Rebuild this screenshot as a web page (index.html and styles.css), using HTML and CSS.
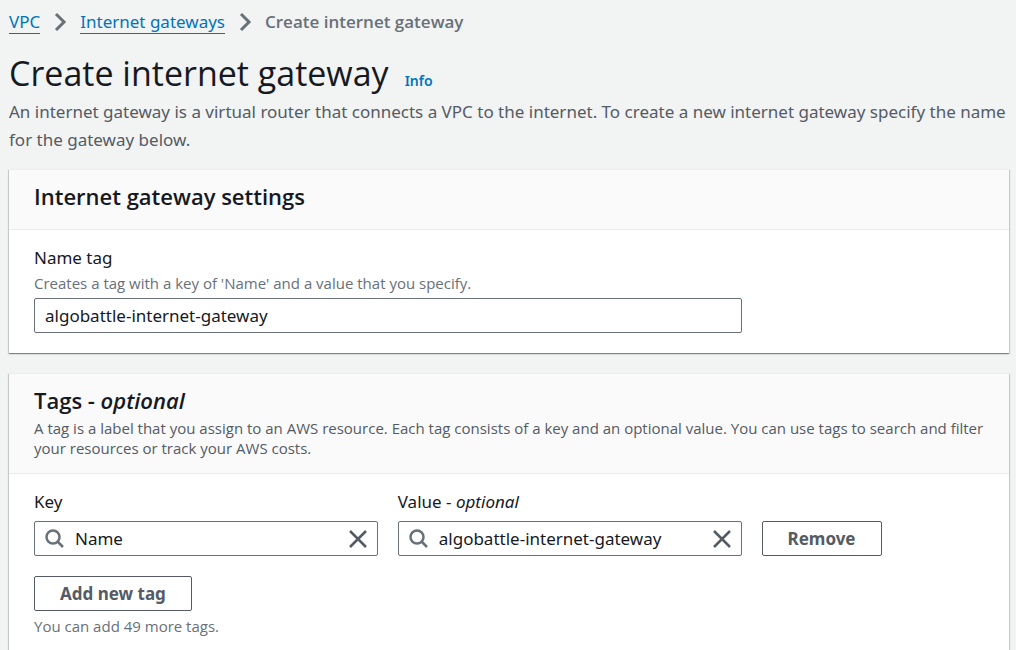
FILE: index.html
```html
<!DOCTYPE html>
<html lang="en">
<head>
  <meta charset="UTF-8" />
  <meta name="viewport" content="width=device-width, initial-scale=1.0" />
  <title>Create internet gateway | VPC</title>
  <link rel="stylesheet" href="styles.css">
</head>
<body>

  <nav class="breadcrumbs" aria-label="Breadcrumbs">
    <a href="#vpc">VPC</a>
    <svg class="chevron" viewBox="0 0 12 20" aria-hidden="true"><path d="M2 2l8 8-8 8" /></svg>
    <a href="#igws">Internet gateways</a>
    <svg class="chevron" viewBox="0 0 12 20" aria-hidden="true"><path d="M2 2l8 8-8 8" /></svg>
    <span class="current">Create internet gateway</span>
  </nav>

  <main>
    <header class="page-header">
      <div class="title-row">
        <h1>Create internet gateway</h1>
        <a class="info" href="#info">Info</a>
      </div>
      <p>An internet gateway is a virtual router that connects a VPC to the internet. To create a new internet gateway specify the name for the gateway below.</p>
    </header>

    <form>
      <section class="card">
        <div class="card-header">
          <h2>Internet gateway settings</h2>
        </div>
        <div class="card-body form-grid">
          <div class="field field-wide">
            <label for="name-tag">Name tag</label>
            <p class="hint" id="name-hint">Creates a tag with a key of 'Name' and a value that you specify.</p>
            <input class="text-input" type="text" id="name-tag" aria-describedby="name-hint" value="algobattle-internet-gateway">
          </div>
        </div>
      </section>

      <section class="card">
        <div class="card-header">
          <h2>Tags - <em>optional</em></h2>
          <p>A tag is a label that you assign to an AWS resource. Each tag consists of a key and an optional value. You can use tags to search and filter your resources or track your AWS costs.</p>
        </div>
        <div class="card-body">
          <div class="form-grid">
            <div class="field tag-field">
              <label for="tag-key">Key</label>
              <div class="search-box">
                <svg class="icon-search" viewBox="0 0 20 20" aria-hidden="true"><circle cx="8" cy="8" r="6.5" /><path d="M12.5 12.5l5.5 5.5" /></svg>
                <input type="text" id="tag-key" value="Name">
                <button class="clear-btn" type="button" aria-label="Clear key">
                  <svg viewBox="0 0 20 20" aria-hidden="true"><path d="M2 2l16 16M18 2L2 18" /></svg>
                </button>
              </div>
            </div>
            <div class="field tag-field">
              <label for="tag-value">Value - <em>optional</em></label>
              <div class="search-box">
                <svg class="icon-search" viewBox="0 0 20 20" aria-hidden="true"><circle cx="8" cy="8" r="6.5" /><path d="M12.5 12.5l5.5 5.5" /></svg>
                <input type="text" id="tag-value" value="algobattle-internet-gateway">
                <button class="clear-btn" type="button" aria-label="Clear value">
                  <svg viewBox="0 0 20 20" aria-hidden="true"><path d="M2 2l16 16M18 2L2 18" /></svg>
                </button>
              </div>
            </div>
            <button class="btn remove-btn" type="button">Remove</button>
          </div>
          <button class="btn add-btn" type="button">Add new tag</button>
          <p class="hint">You can add 49 more tags.</p>
        </div>
      </section>
    </form>
  </main>

</body>
</html>
```

FILE: styles.css
```css
* {
  box-sizing: border-box;
}

body {
  margin: 0;
  padding: 8px 7px 0 9px;
  font-family: 'Noto Sans', 'Open Sans', sans-serif;
  font-size: 17px;
  line-height: 28px;
  background-color: #f2f3f3;
  color: #16191f;
}

h1, h2, p {
  margin: 0;
}

a {
  color: #0073bb;
  text-decoration: none;
}

.breadcrumbs {
  display: flex;
  align-items: center;
  gap: 13px;
}

.breadcrumbs a {
  line-height: 22px;
  border-bottom: 1px solid #0073bb;
}

.chevron {
  width: 14px;
  height: 20px;
  fill: none;
  stroke: #687078;
  stroke-width: 3;
}

.current {
  font-family: 'Open Sans', sans-serif;
  color: #687078;
  font-weight: 600;
}

.page-header {
  padding: 15px 0;
  color: #545b64;
}

.title-row {
  display: flex;
  align-items: baseline;
  gap: 16px;
  margin-bottom: 2px;
}

h1 {
  font-family: 'Open Sans', sans-serif;
  font-size: 34px;
  line-height: 45px;
  font-weight: 400;
  color: #16191f;
}

.info {
  font-size: 14px;
  font-weight: 600;
}

.card {
  margin-bottom: 20px;
  background-color: white;
  border-top: 1px solid #eaeded;
  box-shadow: 0 1px 1px 0 rgba(0,28,36,0.3), 1px 1px 1px 0 rgba(0,28,36,0.15), -1px 1px 1px 0 rgba(0,28,36,0.15);
}

.card:last-child {
  margin-bottom: 0;
}

.card-header {
  min-height: 60px;
  padding: 12px 25px 15px;
  background-color: #fafafa;
  border-bottom: 1px solid #eaeded;
}

h2 {
  font-family: 'Open Sans', sans-serif;
  font-size: 22px;
  line-height: 28px;
  font-weight: 600;
}

.card-header p {
  margin-top: 4px;
  font-family: 'Open Sans', sans-serif;
  font-size: 15px;
  line-height: 20px;
  color: #545b64;
}

.card-body {
  padding: 14px 25px 20px;
}

.form-grid {
  display: grid;
  grid-template-columns: repeat(8, minmax(0, 1fr));
  column-gap: 20px;
  align-items: end;
}

.field {
  display: flex;
  flex-direction: column;
}

.field-wide {
  grid-column: span 6;
}

.tag-field {
  grid-column: span 3;
  gap: 5px;
}

.hint {
  font-family: 'Open Sans', sans-serif;
  font-size: 15px;
  line-height: 22px;
  color: #687078;
}

input {
  min-width: 0;
  font: inherit;
  color: inherit;
}

.text-input,
.search-box {
  height: 35px;
  padding: 0 9px 0 10px;
  background-color: white;
  border: 1px solid #687078;
  border-radius: 2px;
}

.field .hint {
  margin-bottom: 4px;
}

.search-box {
  display: flex;
  align-items: center;
}

.search-box input {
  flex: 1;
  padding: 0 10px;
  background: none;
  border: none;
  outline: none;
}

.search-box svg {
  display: block;
  width: 20px;
  height: 20px;
  fill: none;
  stroke: #545b64;
  stroke-width: 2.5;
}

.search-box .icon-search {
  stroke: #687078;
}

.clear-btn {
  padding: 0;
  background: none;
  border: none;
  cursor: pointer;
}

.btn {
  height: 35px;
  padding: 0 25px;
  font: inherit;
  font-weight: 700;
  color: #545b64;
  background-color: white;
  border: 1px solid #545b64;
  border-radius: 2px;
  cursor: pointer;
}

.remove-btn {
  grid-column: span 2;
  justify-self: start;
}

.add-btn {
  display: block;
  margin: 20px 0 4px;
}
```
